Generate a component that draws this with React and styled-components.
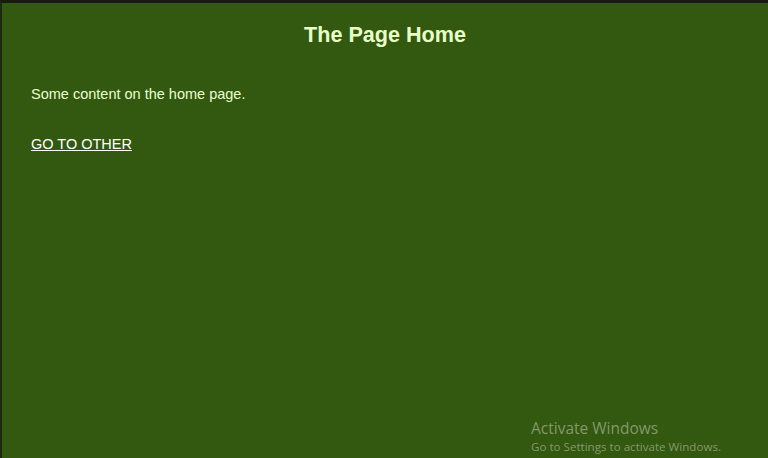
import React from "react";
import styled, { createGlobalStyle } from "styled-components";

const Global = createGlobalStyle`
  html, body { margin: 0; padding: 0; height: 100%; }
  body { background: #33580f; }
  #root { height: 100%; }
`;

const Page = styled.div`
  box-sizing: border-box;
  height: 458px;
  width: 768px;
  background: #33580f;
  border-top: 3px solid #161a12;
  border-left: 2px solid #1c2a10;
  display: flex;
  flex-direction: column;
  font-family: Arial, "Liberation Sans", sans-serif;
  position: relative;
`;

const Title = styled.h1`
  margin: 0;
  padding-top: 19px;
  text-align: center;
  font-size: 21.6px;
  font-weight: bold;
  color: #e6ffc8;
  line-height: 26px;
`;

const Content = styled.main`
  padding: 0 0 0 29px;
  display: flex;
  flex-direction: column;
  gap: 33px;
  margin-top: 38px;
`;

const Text = styled.p`
  margin: 0;
  font-size: 14.5px;
  line-height: 17px;
  color: #e8ffd0;
`;

const Link = styled.a`
  font-size: 14.5px;
  line-height: 17px;
  color: #ffffff;
  text-decoration: underline;
  align-self: flex-start;
`;

const Watermark = styled.div`
  position: absolute;
  left: 529px;
  top: 414px;
  font-family: "Open Sans", "Noto Sans", sans-serif;
  color: rgba(200, 210, 190, 0.55);
  display: flex;
  flex-direction: column;
`;

const WmTitle = styled.span`
  font-size: 15.5px;
  line-height: 22px;
`;

const WmSub = styled.span`
  font-size: 11.6px;
  line-height: 16px;
`;

export default function App() {
  return (
    <>
      <Global />
      <Page>
        <Title>The Page Home</Title>
        <Content>
          <Text>Some content on the home page.</Text>
          <Link href="#">GO TO OTHER</Link>
        </Content>
        <Watermark>
          <WmTitle>Activate Windows</WmTitle>
          <WmSub>Go to Settings to activate Windows.</WmSub>
        </Watermark>
      </Page>
    </>
  );
}
